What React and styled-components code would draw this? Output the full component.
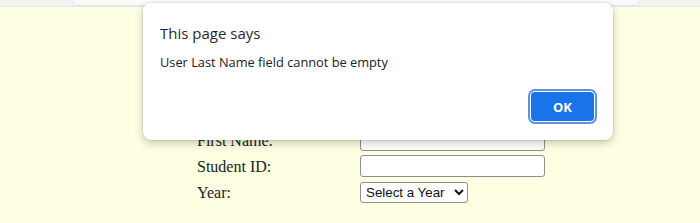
import React from "react";
import styled, { createGlobalStyle } from "styled-components";

const Global = createGlobalStyle`
  html, body { margin: 0; padding: 0; }
  body {
    width: 700px;
    height: 223px;
    overflow: hidden;
    background: #fefee2;
    font-family: "Liberation Serif", serif;
  }
`;

const Page = styled.div`
  position: relative;
  width: 700px;
  height: 223px;
  display: flex;
  flex-direction: column;
`;

const TopStrip = styled.div`
  height: 7px;
  flex: none;
  background: #f2f2f2;
  border-bottom: 1px solid #e6e6e6;
  display: flex;
  padding: 0 62px 0 74px;
  box-sizing: border-box;
`;

const StripPill = styled.div`
  flex: 1;
  height: 5px;
  background: #fbfbfb;
  border-radius: 0 0 8px 8px;
  box-shadow: 0 1px 1px rgba(0, 0, 0, 0.06);
`;

const Main = styled.div`
  flex: 1;
  padding: 96px 0 0 197px;
`;

const FormGrid = styled.div`
  display: grid;
  grid-template-columns: 163px auto;
  grid-auto-rows: 22px;
  row-gap: 4px;
  align-items: center;
  justify-items: start;
`;

const Label = styled.label`
  font-family: "Liberation Serif", serif;
  font-size: 16px;
  color: #222;
  line-height: 18px;
  padding-top: 1px;
`;

const TextInput = styled.input`
  width: 185px;
  height: 22px;
  box-sizing: border-box;
  border: 1px solid #8f8f8f;
  border-radius: 3px;
  background: #fff;
  padding: 1px 2px;
  font-family: "Liberation Sans", sans-serif;
  font-size: 13px;
`;

const Select = styled.select`
  width: 108px;
  height: 21px;
  box-sizing: border-box;
  border: 1px solid #8f8f8f;
  border-radius: 3px;
  background: #fff;
  color: #111;
  font-family: "Liberation Sans", sans-serif;
  font-size: 13.33px;
  padding: 0 1px;
`;

const Dialog = styled.div`
  position: absolute;
  top: 3px;
  left: 143px;
  width: 470px;
  height: 137px;
  box-sizing: border-box;
  background: #fff;
  border-radius: 8px;
  box-shadow: 0 0 0 1px rgba(0, 0, 0, 0.06), 0 3px 8px rgba(0, 0, 0, 0.22);
  padding: 20px 16px 16px 17px;
  display: flex;
  flex-direction: column;
  font-family: "Open Sans", "Noto Sans", sans-serif;
`;

const Title = styled.div`
  font-size: 15px;
  line-height: 20px;
  color: #2a2a2a;
`;

const Message = styled.div`
  margin-top: 10px;
  font-size: 12.8px;
  line-height: 18px;
  color: #202124;
`;

const Actions = styled.div`
  margin-top: auto;
  display: flex;
  justify-content: flex-end;
`;

const OkButton = styled.button`
  width: 63px;
  height: 29px;
  margin: 3px;
  border: none;
  border-radius: 4px;
  background: #1a73e8;
  color: #fff;
  font-family: "Open Sans", "Noto Sans", sans-serif;
  font-weight: 700;
  font-size: 13px;
  box-shadow: 0 0 0 1px #ffffff, 0 0 0 3px #5f91e3;
  cursor: pointer;
`;

export default function App() {
  return (
    <Page>
      <Global />
      <TopStrip>
        <StripPill />
      </TopStrip>
      <Main>
        <FormGrid>
          <Label>Last Name:</Label>
          <TextInput type="text" />
          <Label>First Name:</Label>
          <TextInput type="text" />
          <Label>Student ID:</Label>
          <TextInput type="text" />
          <Label>Year:</Label>
          <Select defaultValue="">
            <option value="">Select a Year</option>
            <option value="1">Freshman</option>
            <option value="2">Sophomore</option>
            <option value="3">Junior</option>
            <option value="4">Senior</option>
          </Select>
        </FormGrid>
      </Main>
      <Dialog role="alertdialog">
        <Title>This page says</Title>
        <Message>User Last Name field cannot be empty</Message>
        <Actions>
          <OkButton>OK</OkButton>
        </Actions>
      </Dialog>
    </Page>
  );
}
